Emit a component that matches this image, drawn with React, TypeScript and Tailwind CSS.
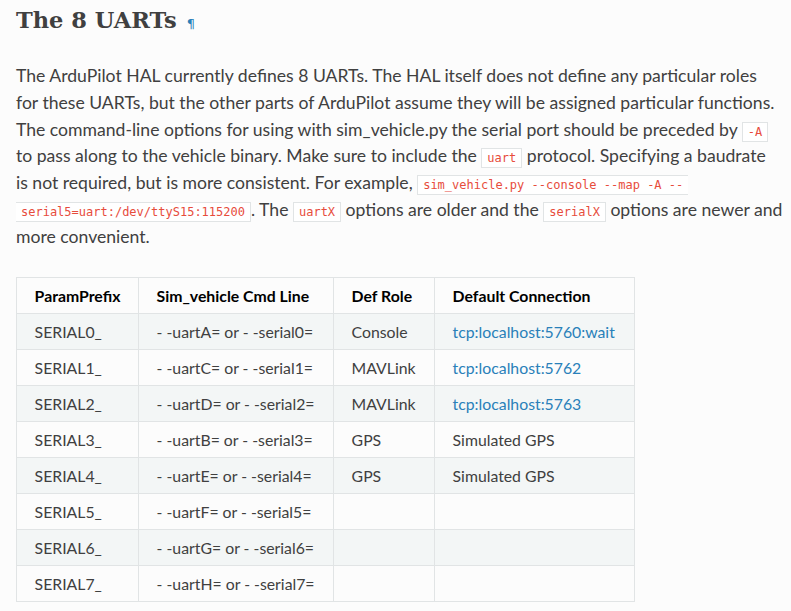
import React from "react";

const codeCls =
  "font-['DejaVu_Sans_Mono',monospace] text-[12px] leading-[14px] text-[#e74c3c] bg-white border border-[#e1e4e5] px-[5px] py-[2px]";

function Code({ children, cls = "" }: { children: React.ReactNode; cls?: string }) {
  return <code className={`${codeCls} ${cls}`}>{children}</code>;
}

const rows: [string, string, string, string, boolean][] = [
  ["SERIAL0_", "- -uartA= or - -serial0=", "Console", "tcp:localhost:5760:wait", true],
  ["SERIAL1_", "- -uartC= or - -serial1=", "MAVLink", "tcp:localhost:5762", true],
  ["SERIAL2_", "- -uartD= or - -serial2=", "MAVLink", "tcp:localhost:5763", true],
  ["SERIAL3_", "- -uartB= or - -serial3=", "GPS", "Simulated GPS", false],
  ["SERIAL4_", "- -uartE= or - -serial4=", "GPS", "Simulated GPS", false],
  ["SERIAL5_", "- -uartF= or - -serial5=", "", "", false],
  ["SERIAL6_", "- -uartG= or - -serial6=", "", "", false],
  ["SERIAL7_", "- -uartH= or - -serial7=", "", "", false],
];

export default function App() {
  return (
    <div className="min-h-screen w-[791px] bg-[#fcfcfc] pl-4 pt-[2px] text-[#404040] font-['Lato',sans-serif]">
      <h2 className="font-['DejaVu_Serif',serif] font-bold text-[22.5px] leading-[36px] text-[#404040] flex items-baseline">
        The 8 UARTs
        <span className="ml-[10px] text-[13px] text-[#2980b9] font-['DejaVu_Sans',sans-serif] font-normal">¶</span>
      </h2>
      <p className="mt-[21px] text-[17.6px] leading-[26.8px] whitespace-nowrap">
        The ArduPilot HAL currently defines 8 UARTs. The HAL itself does not define any particular roles
        <br />
        for these UARTs, but the other parts of ArduPilot assume they will be assigned particular functions.
        <br />
        The command-line options for using with sim_vehicle.py the serial port should be preceded by{" "}
        <Code>-A</Code>
        <br />
        to pass along to the vehicle binary. Make sure to include the <Code>uart</Code> protocol. Specifying a
        baudrate
        <br />
        is not required, but is more consistent. For example,{" "}
        <Code cls="border-r-0">sim_vehicle.py --console --map -A --</Code>
        <br />
        <Code cls="border-l-0">serial5=uart:/dev/ttyS15:115200</Code>. The <Code>uartX</Code> options are older
        and the <Code>serialX</Code> options are newer and
        <br />
        more convenient.
      </p>
      <table className="mt-[26px] table-fixed border-collapse border border-[#e1e4e5] text-[15.8px] w-[618px]">
        <colgroup>
          <col className="w-[122px]" />
          <col className="w-[195px]" />
          <col className="w-[101px]" />
          <col className="w-[200px]" />
        </colgroup>
        <thead>
          <tr className="h-[36px]">
            {["ParamPrefix", "Sim_vehicle Cmd Line", "Def Role", "Default Connection"].map((h) => (
              <th
                key={h}
                className="border border-[#e1e4e5] text-left font-bold text-black px-[17.6px] py-0 leading-[19px] whitespace-nowrap"
              >
                {h}
              </th>
            ))}
          </tr>
        </thead>
        <tbody>
          {rows.map((r, i) => (
            <tr key={r[0]} className={`h-[36px] ${i % 2 === 0 ? "bg-[#f3f6f6]" : "bg-[#fcfcfc]"}`}>
              <td className="border border-[#e1e4e5] px-[17.6px] py-0 leading-[19px] whitespace-nowrap">{r[0]}</td>
              <td className="border border-[#e1e4e5] px-[17.6px] py-0 leading-[19px] whitespace-nowrap">{r[1]}</td>
              <td className="border border-[#e1e4e5] px-[17.6px] py-0 leading-[19px] whitespace-nowrap">{r[2]}</td>
              <td
                className={`border border-[#e1e4e5] px-[17.6px] py-0 leading-[19px] whitespace-nowrap ${
                  r[4] ? "text-[#2980b9]" : ""
                }`}
              >
                {r[3]}
              </td>
            </tr>
          ))}
        </tbody>
      </table>
    </div>
  );
}
